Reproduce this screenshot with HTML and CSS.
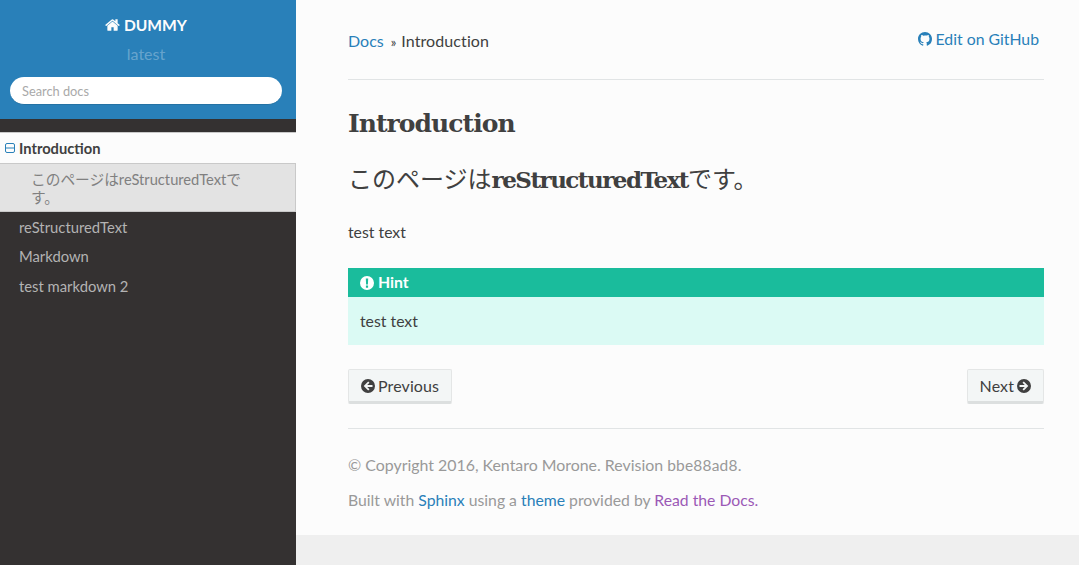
FILE: index.html
```html
<!DOCTYPE html>
<html lang="en">
<head>
<meta charset="utf-8">
<title>Introduction</title>
<link rel="stylesheet" href="styles.css">
</head>
<body>
<div class="layout">
  <nav class="side">
    <div class="side-head">
      <a class="project"><svg class="ic-home" viewBox="0 0 1664 1792"><path fill="currentColor" d="M1408 992v480q0 26-19 45t-45 19H960v-384H704v384H320q-26 0-45-19t-19-45V992q0-1 .5-3t.5-3l575-474 575 474q1 2 1 6zm223-69l-62 74q-8 9-21 11h-3q-13 0-21-7L832 424 140 1001q-12 8-24 7-13-2-21-11l-62-74q-8-10-7-23.500t11-21.500l719-599q32-26 76-26t76 26l244 204V288q0-14 9-23t23-9h192q14 0 23 9t9 23v408l219 182q10 8 11 21.500t-7 23.500z"/></svg> DUMMY</a>
      <div class="version">latest</div>
      <div class="search">Search docs</div>
    </div>
    <ul class="menu">
      <li class="cur-top"><svg class="ic-minus" viewBox="0 0 10 10"><rect x=".5" y=".5" width="9" height="9" rx="1.500" fill="none" stroke="currentColor"/><path d="M0 5h10" stroke="currentColor"/></svg>Introduction</li>
      <li class="cur-sub">このページはreStructuredTextです。</li>
      <li>reStructuredText</li>
      <li class="item-md">Markdown</li>
      <li>test markdown 2</li>
    </ul>
  </nav>
  <div class="main">
    <main class="content">
      <div class="crumbs">
        <div class="crumb-left"><a class="link">Docs</a><span class="sep">»</span><span class="crumb-cur">Introduction</span></div>
        <a class="link edit"><svg class="ic-gh" viewBox="0 0 16 16"><path fill="currentColor" d="M8 0C3.580 0 0 3.580 0 8c0 3.540 2.290 6.530 5.470 7.590.4.070.55-.17.55-.38v-1.340c-2.230.48-2.700-1.070-2.700-1.070-.36-.93-.89-1.170-.89-1.170-.73-.5.050-.49.050-.49.8.060 1.220.82 1.220.82.710 1.220 1.870.87 2.330.66.070-.52.28-.87.51-1.070-1.780-.2-3.640-.89-3.640-3.950 0-.87.31-1.590.82-2.150-.08-.2-.36-1.020.08-2.120 0 0 .67-.21 2.200.82A7.600 7.600 0 0 1 8 3.870c.68 0 1.360.09 2 .27 1.530-1.040 2.200-.82 2.200-.82.44 1.100.16 1.920.08 2.120.51.560.82 1.270.82 2.150 0 3.070-1.870 3.750-3.650 3.950.29.250.54.730.54 1.480v2.190c0 .21.150.46.550.38A8.010 8.010 0 0 0 16 8c0-4.420-3.580-8-8-8z"/></svg> Edit on GitHub</a>
      </div>
      <hr class="rule">
      <h1>Introduction</h1>
      <h2>このページは<span class="slab">reStructuredText</span>です。</h2>
      <p class="para">test text</p>
      <div class="hint">
        <div class="hint-title"><svg class="ic-excl" viewBox="1 1 14 14"><path fill="currentColor" fill-rule="evenodd" d="M8 1a7 7 0 1 0 0 14A7 7 0 0 0 8 1zM6.800 3.500h2.400L8.900 9.500H7.100zM6.900 10.500h2.200v2.200H6.900z"/></svg><span class="hint-label">Hint</span></div>
        <p class="hint-body">test text</p>
      </div>
      <div class="pager">
        <a class="btn"><svg class="ic-arrow" viewBox="1 1 14 14"><path fill="currentColor" fill-rule="evenodd" d="M8 1a7 7 0 1 1 0 14A7 7 0 0 1 8 1zM8.200 3.500L3.700 8l4.500 4.500 1.300-1.300L7.200 9h5.300V7H7.200l2.300-2.200z"/></svg>Previous</a>
        <a class="btn">Next<svg class="ic-arrow ic-next" viewBox="1 1 14 14"><path fill="currentColor" fill-rule="evenodd" d="M8 1a7 7 0 1 0 0 14A7 7 0 0 0 8 1zM7.800 3.500L12.300 8l-4.500 4.500-1.300-1.300L8.800 9H3.500V7h5.300L6.500 4.800z"/></svg></a>
      </div>
      <hr class="rule foot-rule">
      <footer class="foot">
        <p class="copy">© Copyright 2016, Kentaro Morone. <span class="rev">Revision <code>bbe88ad8</code>.</span></p>
        <p>Built with <a class="link">Sphinx</a> using a <a class="link">theme</a> provided by <a class="visited">Read the Docs.</a></p>
      </footer>
    </main>
  </div>
</div>
</body>
</html>
```
FILE: styles.css
```css
* { box-sizing: border-box; }
html, body { margin: 0; height: 100%; }
body {
  font-family: Lato, "Noto Sans CJK JP", sans-serif;
  font-size: 16px;
  color: #404040;
  background: #efefef;
  overflow: hidden;
}
.layout { display: flex; height: 565px; }

.side { width: 296px; flex: none; background: #343131; }
.side-head {
  height: 119px;
  background: #2980b9;
  padding: 15px 14px 0 10px;
  text-align: center;
  color: #fcfcfc;
}
.project { display: block; font-weight: 700; font-size: 15.600px; line-height: 20px; color: #fcfcfc; }
.ic-home { width: 15px; height: 16px; vertical-align: -2px; }
.version { margin-top: 9px; line-height: 20px; color: rgba(255, 255, 255, .3); }
.search {
  margin-top: 13px;
  height: 28px;
  border-radius: 50px;
  background: #fff;
  border-bottom: 1px solid #2472a4;
  padding: 0 12px;
  text-align: left;
  font-size: 12.800px;
  line-height: 28px;
  color: #a9a9a9;
}
.menu { list-style: none; margin: 13px 0 0; padding: 0; color: #b3b3b3; font-size: 14.800px; }
.menu li { padding: 0 19px; height: 29.500px; line-height: 30px; }
.menu li.item-md { line-height: 29px; }
.menu li.cur-top {
  display: flex;
  align-items: center;
  height: 31px;
  background: #fcfcfc;
  border-top: 1px solid #c9c9c9;
  padding: 0 5px;
  font-weight: 700;
  font-size: 14.700px;
  color: #404040;
}
.ic-minus { width: 10px; height: 10px; margin-right: 4px; color: #2980b9; }
.menu li.cur-sub {
  height: 49px;
  background: #e3e3e3;
  border-top: 1px solid #c9c9c9;
  border-bottom: 1px solid #c9c9c9;
  border-right: 1px solid #c9c9c9;
  padding: 6px 50px 0 31px;
  line-height: 18px;
  font-size: 14.700px;
  color: #808080;
}

.main { flex: 1; min-width: 0; }
.content { height: 535px; background: #fcfcfc; padding: 26px 35px 0 52px; }
.crumbs { display: flex; justify-content: space-between; height: 30px; padding-right: 5px; }
.crumb-left { font-size: 16px; line-height: 30px; }
.crumb-cur { letter-spacing: .1px; }
.sep { margin: 0 5px 0 7px; font-size: 13px; }
.link { color: #2980b9; }
.visited { color: #9b59b6; }
.edit { font-size: 15.800px; line-height: 26px; }
.ic-gh { width: 14px; height: 14px; vertical-align: -1px; }
.rule { margin: 23px 0 0; border: 0; border-top: 1px solid #e1e4e5; }
h1, .slab { font-family: "DejaVu Serif", serif; }
h1 { margin: 27px 0 0; font-size: 25px; line-height: 34px; font-weight: 700; color: #404040; letter-spacing: -.95px; }
h2 {
  margin: 21px 0 0;
  font-family: "Noto Sans CJK JP", sans-serif;
  font-size: 24px;
  line-height: 32px;
  font-weight: 400;
  color: #404040;
}
.slab { font-size: 23px; font-weight: 700; letter-spacing: -1.500px; }
.para { margin: 24px 0 0; font-size: 15.800px; line-height: 24px; }
.hint { margin-top: 24px; background: #dbfaf4; }
.hint-title {
  display: flex;
  align-items: center;
  height: 29px;
  padding: 0 12px;
  background: #1abc9c;
  color: #fff;
  font-weight: 700;
  font-size: 15.800px;
}
.hint-label { line-height: 27px; height: 29px; }
.ic-excl { width: 14px; height: 14px; margin-right: 4px; }
.hint-body { margin: 0; padding: 12px; font-size: 15.800px; line-height: 24px; height: 48px; }
.pager { display: flex; justify-content: space-between; margin-top: 24px; }
.btn {
  display: flex;
  align-items: center;
  height: 35px;
  padding: 0 12px;
  background: #f3f6f6;
  border: 1px solid #e4e6e6;
  border-bottom: 3px solid #dcdfdf;
  border-radius: 2px;
  font-size: 16px;
  letter-spacing: .1px;
  color: #404040;
}
.ic-arrow { width: 14px; height: 14px; margin-right: 3px; }
.ic-next { margin: 0 0 0 3px; }
.foot-rule { margin-top: 24px; }
.foot { font-size: 15.750px; color: #999; }
.foot p { margin: 0; line-height: 24px; padding-top: 24px; }
.foot p + p { padding-top: 11px; }
.foot .copy { font-size: 15.900px; }
.rev code { font-family: Lato, sans-serif; font-size: 15.500px; letter-spacing: .2px; }
```
